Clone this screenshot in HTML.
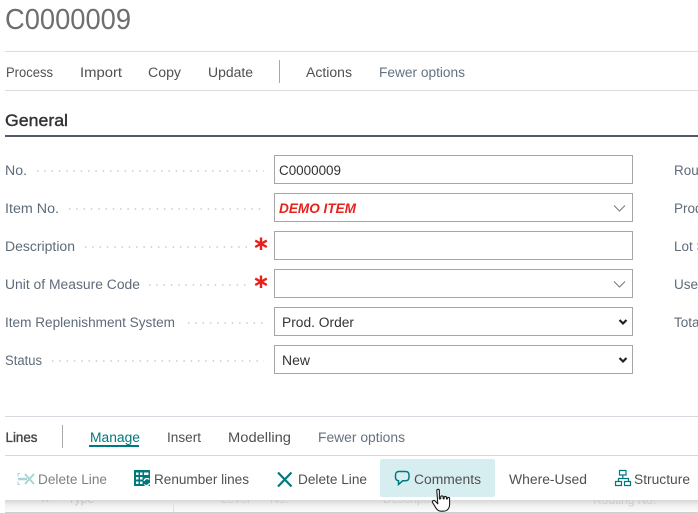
<!DOCTYPE html>
<html lang="en">
<head>
<meta charset="utf-8">
<title>C0000009</title>
<style>
html,body{margin:0;padding:0;width:698px;height:513px;overflow:hidden;background:#fff}
svg{display:block;font-family:"Liberation Sans",sans-serif}
text{font-size:13.5px;fill:#505050}
.lbl{fill:#5f6b7a}
.val{fill:#333}
.box{fill:#fff;stroke:#a6a6a6;stroke-width:1}
.dots{stroke:#c4c8cc;stroke-width:1.4;stroke-dasharray:1.4 5.9;fill:none}
.req{stroke:#e8211d;stroke-width:2.4;fill:none}
.chev{stroke:#777;stroke-width:1;fill:none}
.chevb{stroke:#222;stroke-width:2.2;fill:none}
.teal{stroke:#00797e;fill:none}
</style>
</head>
<body>
<svg width="698" height="513" viewBox="0 0 698 513" xmlns="http://www.w3.org/2000/svg">
<defs>
<linearGradient id="sh" x1="0" y1="0" x2="0" y2="1">
<stop offset="0" stop-color="#d6d6d6"/>
<stop offset="0.45" stop-color="#f0f0f0"/>
<stop offset="1" stop-color="#fbfbfb"/>
</linearGradient>
</defs>

<text x="5" y="29" textLength="126" lengthAdjust="spacingAndGlyphs" style="font-size:29px;fill:#6e6e6e">C0000009</text>

<rect x="5" y="51" width="693" height="1" fill="#dcdcdc"/>
<text x="6" y="77" textLength="47" lengthAdjust="spacingAndGlyphs">Process</text>
<text x="80" y="77" textLength="42" lengthAdjust="spacingAndGlyphs">Import</text>
<text x="148" y="77" textLength="33" lengthAdjust="spacingAndGlyphs">Copy</text>
<text x="208" y="77" textLength="45" lengthAdjust="spacingAndGlyphs">Update</text>
<rect x="279" y="60" width="1" height="23" fill="#a8a8a8"/>
<text x="306" y="77" textLength="46" lengthAdjust="spacingAndGlyphs">Actions</text>
<text x="379" y="77" textLength="86" lengthAdjust="spacingAndGlyphs" style="fill:#64727f">Fewer options</text>
<rect x="5" y="90" width="693" height="1" fill="#dcdcdc"/>

<text x="5" y="126" textLength="63" lengthAdjust="spacingAndGlyphs" style="font-size:17px;fill:#333;stroke:#333;stroke-width:.4">General</text>
<rect x="5" y="135" width="693" height="2" fill="#505a6b"/>

<text class="lbl" x="5" y="175" textLength="22" lengthAdjust="spacingAndGlyphs">No.</text>
<line class="dots" x1="37" y1="171" x2="264" y2="171"/>
<text class="lbl" x="5" y="213" textLength="54" lengthAdjust="spacingAndGlyphs">Item No.</text>
<line class="dots" x1="69" y1="209" x2="264" y2="209"/>
<text class="lbl" x="5" y="251" textLength="70" lengthAdjust="spacingAndGlyphs">Description</text>
<line class="dots" x1="85" y1="247" x2="248" y2="247"/>
<text class="lbl" x="5" y="289" textLength="135" lengthAdjust="spacingAndGlyphs">Unit of Measure Code</text>
<line class="dots" x1="149" y1="285" x2="248" y2="285"/>
<text class="lbl" x="5" y="327" textLength="170" lengthAdjust="spacingAndGlyphs">Item Replenishment System</text>
<line class="dots" x1="188" y1="323" x2="264" y2="323"/>
<text class="lbl" x="5" y="365" textLength="37" lengthAdjust="spacingAndGlyphs">Status</text>
<line class="dots" x1="52" y1="361" x2="264" y2="361"/>

<path class="req" d="M261 237.5V250M255.2 240.6L266.8 247M255.2 247L266.8 240.6"/>
<path class="req" d="M261 275.5V288M255.2 278.6L266.8 285M255.2 285L266.8 278.6"/>

<rect class="box" x="274.5" y="155.5" width="358" height="28"/>
<rect class="box" x="274.5" y="193.5" width="358" height="28"/>
<rect class="box" x="274.5" y="231.5" width="358" height="28"/>
<rect class="box" x="274.5" y="269.5" width="358" height="28"/>
<rect class="box" x="274.5" y="307.5" width="358" height="28"/>
<rect class="box" x="274.5" y="345.5" width="358" height="28"/>

<text class="val" x="279" y="175" textLength="62" lengthAdjust="spacingAndGlyphs">C0000009</text>
<text x="279" y="213" textLength="77" lengthAdjust="spacingAndGlyphs" style="font-weight:bold;font-style:italic;fill:#e8211d">DEMO ITEM</text>
<text class="val" x="282" y="327" textLength="72" lengthAdjust="spacingAndGlyphs">Prod. Order</text>
<text class="val" x="282" y="365" textLength="28" lengthAdjust="spacingAndGlyphs">New</text>

<path class="chev" d="M614 205.5L619.5 211L625 205.5"/>
<path class="chev" d="M614 281.5L619.5 287L625 281.5"/>
<path class="chevb" d="M619.5 320L623 323.5L626.5 320"/>
<path class="chevb" d="M619.5 358L623 361.5L626.5 358"/>

<text class="lbl" x="674" y="175">Routing</text>
<text class="lbl" x="674" y="213">Production</text>
<text class="lbl" x="674" y="251">Lot Size</text>
<text class="lbl" x="674" y="289">User</text>
<text class="lbl" x="674" y="327">Total</text>

<rect x="5" y="416" width="693" height="1" fill="#d8d8e0"/>
<text x="5.5" y="442" textLength="32" lengthAdjust="spacingAndGlyphs" style="font-size:13.5px;fill:#444;stroke:#444;stroke-width:.35">Lines</text>
<rect x="62" y="425" width="1" height="23" fill="#a8a8a8"/>
<text x="90" y="442" textLength="50" lengthAdjust="spacingAndGlyphs" style="fill:#00797e">Manage</text>
<rect x="89" y="445" width="50" height="2" fill="#00797e"/>
<text x="167" y="442" textLength="34" lengthAdjust="spacingAndGlyphs">Insert</text>
<text x="228" y="442" textLength="63" lengthAdjust="spacingAndGlyphs">Modelling</text>
<text x="318" y="442" textLength="87" lengthAdjust="spacingAndGlyphs" style="fill:#64727f">Fewer options</text>

<rect x="5" y="500" width="693" height="12" fill="url(#sh)"/>
<rect x="173" y="500" width="1" height="12" fill="#e2e2e2"/>
<rect x="5" y="512" width="693" height="1" fill="#cfcfcf"/>
<text x="40" y="503" style="font-size:12px;fill:#c4c4c4">✕</text>
<text x="68" y="503" style="font-size:12px;fill:#c4c4c4">Type</text>
<text x="221" y="503" style="font-size:12px;fill:#cccccc">Level</text>
<text x="270" y="503" style="font-size:12px;fill:#cccccc">No.</text>
<text x="383" y="503" style="font-size:12px;fill:#cccccc">Description</text>
<text x="593" y="504" style="font-size:12px;fill:#cccccc">Routing No.</text>

<rect x="5" y="455" width="693" height="45" fill="#fff"/>
<rect x="5" y="455" width="693" height="1" fill="#d8d8d8"/>

<path d="M20 473.5h-2.500M20 484.5h-2.500M18 473.5v3M18 481.5v3" stroke="#a9d4d6" fill="none"/>
<path d="M18 479h9" stroke="#a9d4d6" stroke-width="2.500" fill="none"/>
<path d="M25 474l9 10M34 474l-9 10" stroke="#a9d4d6" stroke-width="2" fill="none"/>
<text x="38" y="484" textLength="69" lengthAdjust="spacingAndGlyphs" style="fill:#7d8084">Delete Line</text>

<rect x="134" y="470" width="16" height="16" fill="#00797e"/>
<path d="M136 472.500h2.500v2.500h-2.500zM140 472.500h2.500v2.500h-2.500zM144 472.500h4.500v2.500h-4.500zM136 477h2.500v2.500h-2.500zM140 477h2.500v2.500h-2.500zM136 481.500h2.500v2.500h-2.500zM140 481.500h2.500v2.500h-2.500z" fill="#fff"/>
<path d="M144 481a3 3 0 0 1 5.200-1.500M149.500 483a3 3 0 0 1-5.200 1.500" stroke="#fff" stroke-width="1.200" fill="none"/>
<text x="154" y="484" textLength="95" lengthAdjust="spacingAndGlyphs">Renumber lines</text>

<path class="teal" stroke-width="2.200" d="M278 472.500l13.500 14M291.500 472.500l-13.500 14"/>
<text x="298" y="484" textLength="69" lengthAdjust="spacingAndGlyphs">Delete Line</text>

<rect x="380" y="459" width="115" height="38" rx="2" fill="#d7eef0"/>
<path class="teal" stroke-width="1.500" d="M398.500 480.800c-2-.300-3-1.700-3-3.500v-2.300c0-2.200 1.400-3.500 3.500-3.500h6.500c2.200 0 3.500 1.300 3.500 3.500v2.300c0 2.200-1.300 3.500-3.500 3.500h-2.800l-4.200 3.700z"/>
<text x="414" y="484" textLength="67" lengthAdjust="spacingAndGlyphs">Comments</text>
<text x="509" y="484" textLength="78" lengthAdjust="spacingAndGlyphs">Where-Used</text>

<path class="teal" stroke-width="1.200" d="M619.500 470.500h6.500v4.500h-6.500zM615.500 481.500h6v4h-6zM624.500 481.500h6v4h-6zM622.800 475v3.500M618.500 481.500v-3h10v3"/>
<text x="634" y="484" textLength="56" lengthAdjust="spacingAndGlyphs">Structure</text>

<path d="M436.800 490.500c0-1.600 2.600-1.600 2.600 0v8.500l1.300-.300v-1.700c0-1.400 2.500-1.400 2.500 0v1.800h.900v-1.300c0-1.400 2.400-1.400 2.400 0v1.500h.800v-.500c0-1.400 2.300-1.400 2.300 0v5.700c0 4-2.200 7-6.200 7h-2.200c-2.700 0-4.100-1.300-5.400-3.400l-3.200-5.200c-.900-1.500 1.100-2.900 2.400-1.600l2.800 2.800z" fill="#fff" stroke="#1a1a1a" stroke-width="1.100" stroke-linejoin="round"/>
</svg>
</body>
</html>
